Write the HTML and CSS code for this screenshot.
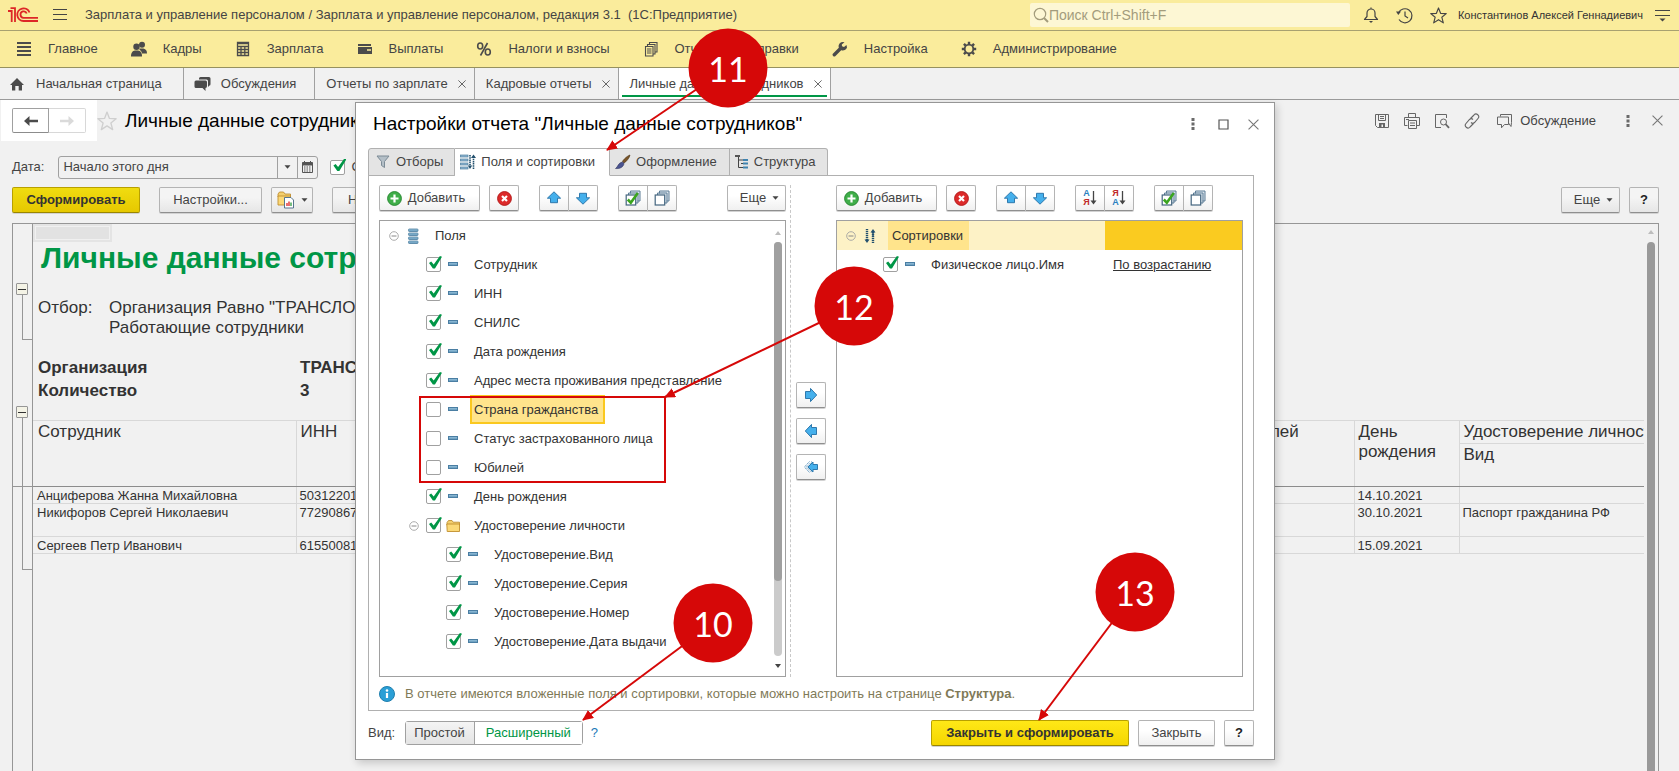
FILE: index.html
```html
<!DOCTYPE html>
<html lang="ru">
<head>
<meta charset="utf-8">
<meta name="viewport" content="width=device-width, initial-scale=1">
<title>Зарплата и управление персоналом</title>
<link rel="stylesheet" href="styles.css">
</head>
<body>
<svg class="sprite" aria-hidden="true">
  <defs>
    <linearGradient id="gBlue" x1="0" y1="0" x2="0" y2="1"><stop offset="0" stop-color="#9cc7e0"/><stop offset="1" stop-color="#5d92b5"/></linearGradient>
  </defs>
  <symbol id="i-close" viewBox="0 0 10 10"><path d="M0.5 0.5L9.5 9.5M9.5 0.5L0.5 9.5" fill="none" stroke="currentColor"/></symbol>
  <symbol id="i-dots" viewBox="0 0 4 12"><path d="M0.5 0h3v3h-3zM0.5 4.5h3v3h-3zM0.5 9h3v3h-3z" fill="#6a6a6a"/></symbol>
  <symbol id="i-star" viewBox="0 0 18 18"><path d="M9 1l2.200 5.700 6 .3-4.700 3.800 1.600 6L9 13.400l-5.100 3.400 1.600-6L.8 7l6-.3z" fill="none" stroke="currentColor" stroke-width="1.200" stroke-linejoin="round"/></symbol>
  <symbol id="i-add" viewBox="0 0 15 15"><circle cx="7.500" cy="7.500" r="6.900" fill="#3fae49" stroke="#2b8a35"/><path d="M7.500 3.500v8M3.500 7.500h8" stroke="#fff" stroke-width="2.200"/></symbol>
  <symbol id="i-del" viewBox="0 0 15 15"><circle cx="7.500" cy="7.500" r="6.900" fill="#dc2a2a" stroke="#b51d1d"/><path d="M5 5l5 5M10 5l-5 5" stroke="#fff" stroke-width="2.200"/></symbol>
  <symbol id="i-up" viewBox="0 0 16 16"><path d="M8 1.800l6.600 6.400h-3.100v4.500h-7V8.200H1.400z" fill="#45b0ec" stroke="#2f79ad" stroke-linejoin="round"/></symbol>
  <symbol id="i-down" viewBox="0 0 16 16"><path d="M8 14.200l6.600-6.400h-3.100V3.300h-7v4.500H1.400z" fill="#45b0ec" stroke="#2f79ad" stroke-linejoin="round"/></symbol>
  <symbol id="i-right" viewBox="0 0 16 16"><path d="M13.700 8L7.500 14.600v-3.100H2.500v-7h5V1.400z" fill="#45b0ec" stroke="#2f79ad" stroke-linejoin="round"/></symbol>
  <symbol id="i-left" viewBox="0 0 16 16"><path d="M2.300 8l6.200 6.600v-3.100h5v-7h-5V1.400z" fill="#45b0ec" stroke="#2f79ad" stroke-linejoin="round"/></symbol>
  <symbol id="i-left2" viewBox="0 0 16 16"><path d="M5 8l5 5v-2.500h4.500v-5H10V3z" fill="#45b0ec" stroke="#2f79ad" stroke-linejoin="round"/><path d="M6.500 2.500L1.500 8l5 5.500M9 2.500L3.500 8l5.500 5.500" fill="none" stroke="#2f79ad" stroke-width=".8" stroke-dasharray="1.500 .7"/></symbol>
  <symbol id="i-sheets" viewBox="0 0 16 16"><path d="M5.500 3.500v-2.500h9.500v10h-2.500M3.500 5.500v-2.500h9.500v10h-2.500" fill="#dce6ee" stroke="#5c7d96"/><rect x="1.200" y="5" width="9.500" height="10" fill="#fff" stroke="#44657f" stroke-width="1.200"/></symbol>
  <symbol id="i-sheets-on" viewBox="0 0 16 16"><path d="M5.500 3.500v-2.500h9.500v10h-2.500M3.500 5.500v-2.500h9.500v10h-2.500" fill="#dce6ee" stroke="#5c7d96"/><rect x="1.200" y="5" width="9.500" height="10" fill="#fff" stroke="#44657f" stroke-width="1.200"/><path d="M2.800 9.500l3 3.200L12.800 3" fill="none" stroke="#3aa51e" stroke-width="2.600"/></symbol>
  <symbol id="i-minus" viewBox="0 0 10 10"><circle cx="5" cy="5" r="4.300" fill="none" stroke="#a3a3a3" stroke-width=".9"/><path d="M2.500 5h5" stroke="#888"/></symbol>
  <symbol id="i-stack" viewBox="0 0 15 16"><g fill="url(#gBlue)" stroke="#4d7f9f" stroke-width=".8"><rect x="2.500" y="1" width="9.500" height="2.500" rx=".8"/><rect x="2.500" y="5" width="9.500" height="2.500" rx=".8"/><rect x="2.500" y="9" width="9.500" height="2.500" rx=".8"/><rect x="2.500" y="13" width="9.500" height="2.500" rx=".8"/></g></symbol>
  <symbol id="i-field" viewBox="0 0 15 16"><rect x="2.500" y="5.500" width="9" height="3" fill="url(#gBlue)" stroke="#4a7ea3"/></symbol>
  <symbol id="i-folder" viewBox="0 0 15 16"><path d="M1 4.500l1.500-2h3.500l1.200 1.700h6.300v3H1z" fill="#f3cf6f" stroke="#b98627" stroke-width=".8"/><path d="M.8 6h12.700v7.500H1.200z" fill="#fbd978" stroke="#c18f2e" stroke-width=".9"/></symbol>
  <symbol id="i-sorts" viewBox="0 0 15 16"><path d="M4 1v11" stroke="#23506e" stroke-width="2.400" stroke-dasharray="1.200 .8"/><path d="M1.500 11.500h5l-2.500 3.500z" fill="#23506e"/><path d="M10 15V4" stroke="#23506e" stroke-width="2.400" stroke-dasharray="1.200 .8"/><path d="M10 9V3" stroke="#23506e" stroke-width="1.400"/><path d="M7.500 4.500h5L10 1z" fill="#23506e"/></symbol>
  <symbol id="i-caret" viewBox="0 0 7 4"><path d="M0.500 0.300h6L3.500 3.800z" fill="#444"/></symbol>
  <symbol id="i-chat" viewBox="0 0 17 16"><path d="M4.500 3.500V1.500h11v8l-.5 4-2.500-3.500" fill="none" stroke="#666" stroke-linejoin="round"/><path d="M1.500 4h11v7.500H8.500L5.500 14.800V11.500h-4z" fill="none" stroke="#666" stroke-linejoin="round"/></symbol>
</svg>

<header class="titlebar">
  <svg class="logo" viewBox="0 0 30 16" role="img" aria-label="1С"><g fill="none" stroke="#dd2727" stroke-width="1.800"><path d="M0 4H3.700V15M2.500 1.200H7V15"/><path d="M21.500 5.500A6.300 6.300 0 1 0 15.500 14H30"/><path d="M18.700 6.500A3.200 3.200 0 1 0 15.500 10.800H30"/></g></svg>
  <button class="plain" aria-label="Меню"><svg width="14" height="14" viewBox="0 0 14 14"><path d="M0 1.500h14M0 6.500h14M0 11.500h14" stroke="#444"/></svg></button>
  <h1 class="app-title">Зарплата и управление персоналом / Зарплата и управление персоналом, редакция 3.1&nbsp; (1С:Предприятие)</h1>
  <label class="search">
    <svg width="16" height="16" viewBox="0 0 16 16"><circle cx="7" cy="7" r="5.700" fill="none" stroke="#a39c7c" stroke-width="1.200"/><path d="M11 11l4 4" stroke="#a39c7c" stroke-width="2"/></svg>
    <input type="text" placeholder="Поиск Ctrl+Shift+F" aria-label="Поиск">
  </label>
  <nav class="title-tools">
    <button class="plain" aria-label="Уведомления"><svg width="16" height="17" viewBox="0 0 16 17"><path d="M1.500 12.500l2.500-3V6a4 4 0 0 1 8 0v3.500l2.500 3z M8 2V.5" fill="none" stroke="#444" stroke-width="1.200" stroke-linejoin="round"/><path d="M6 14h4l-2 2z" fill="#444"/></svg></button>
    <button class="plain" aria-label="История"><svg width="17" height="17" viewBox="0 0 17 17"><path d="M2.500 6A7 7 0 1 1 3 12.500" fill="none" stroke="#444" stroke-width="1.200"/><path d="M0 4.500h5L2.300 8z" fill="#444"/><path d="M9 4.500V9l3 2" fill="none" stroke="#444" stroke-width="1.200"/></svg></button>
    <button class="plain" aria-label="Избранное"><svg width="17" height="17"><use href="#i-star"/></svg></button>
  </nav>
  <span class="user">Константинов Алексей Геннадиевич</span>
  <button class="plain" aria-label="Сервис"><svg width="15" height="14" viewBox="0 0 15 14"><path d="M0 2.500h15M0 7.500h15" stroke="#444"/><path d="M4.500 10.500h6l-3 3z" fill="#444"/></svg></button>
</header>

<nav class="sections">
  <a href="#"><svg width="16" height="16" viewBox="0 0 16 16"><path d="M1 2h14M1 6h14M1 10h14M1 14h14" stroke="#4b4b4b" stroke-width="2"/></svg>Главное</a>
  <a href="#"><svg width="16" height="16" viewBox="0 0 16 16"><g fill="#4b4b4b"><circle cx="11" cy="3.800" r="3"/><path d="M8.500 7.500h4c2.500 1 3.500 2 3.500 5h-5c-.3-2-1-3-2.500-3.800z"/><circle cx="5.500" cy="5.800" r="3.200"/><path d="M0 15.500c0-4 1.500-5.500 4-6h3c2.500.5 4 2 4 6z"/></g></svg>Кадры</a>
  <a href="#"><svg width="16" height="16" viewBox="0 0 16 16"><path d="M2.500 1.500h11v13h-11zM2.500 5.500h11M2.500 8.500h11M2.500 11.500h11M6 5.500v9M9.800 5.500v9M2.500 2.500h11" fill="none" stroke="#4b4b4b" stroke-width="1.300"/></svg>Зарплата</a>
  <a href="#"><svg width="16" height="16" viewBox="0 0 16 16"><path d="M1 3h13v2H1zM1 6h14v7H1z" fill="#4b4b4b"/><path d="M10 9h4" stroke="#faec9c" stroke-width="1.500"/></svg>Выплаты</a>
  <a href="#"><svg width="16" height="16" viewBox="0 0 16 16"><g fill="none" stroke="#4b4b4b" stroke-width="1.600"><ellipse cx="4.200" cy="5" rx="2.500" ry="3"/><ellipse cx="11.800" cy="11" rx="2.500" ry="3"/><path d="M11.500 2L4.500 14.500"/></g></svg>Налоги и взносы</a>
  <a href="#"><svg width="16" height="16" viewBox="0 0 16 16"><g fill="none" stroke="#4b4b4b" stroke-width="1.100"><path d="M2.500 5.500h7.500v9.500H2.500zM4 8h4.500M4 10h4.500M4 12h4.500M4.500 5.500V3.500h7.500V13H10M6.500 3.500V1.500H14V11h-2"/></g></svg>Отчетность, справки</a>
  <a href="#"><svg width="16" height="16" viewBox="0 0 16 16"><path d="M2.300 13.700L9 7" stroke="#4b4b4b" stroke-width="3.400" stroke-linecap="round"/><path d="M12.500 1.200A4.300 4.300 0 1 0 15 6.500L14.500 4l-2.500 2-2-.8-.2-1.700z" fill="#4b4b4b"/></svg>Настройка</a>
  <a href="#"><svg width="16" height="16" viewBox="0 0 16 16"><circle cx="8" cy="8" r="4.300" fill="none" stroke="#4b4b4b" stroke-width="1.800"/><path d="M8 .8v2.500M8 12.700v2.500M.8 8h2.500M12.700 8h2.500M2.900 2.900l1.800 1.800M11.300 11.300l1.800 1.800M2.900 13.100l1.800-1.800M11.300 4.700l1.800-1.800" stroke="#4b4b4b" stroke-width="2.400"/></svg>Администрирование</a>
</nav>

<nav class="tabs">
  <a class="tab tab-home" href="#"><svg width="16" height="16" viewBox="0 0 16 16"><path d="M8 2l7 7h-2v5.500H9.700V10H6.300v4.500H3V9H1z" fill="#4b4b4b"/></svg>Начальная страница</a>
  <a class="tab tab-talk" href="#"><svg width="17" height="16" viewBox="0 0 17 16"><path d="M5 2.500Q5 1 6.500 1h8.500Q16.500 1 16.500 2.500V8q0 1.500-1 1.500L14 11V5q0-1.500-1.500-1.500H5z" fill="#4b4b4b"/><path d="M0.500 6q0-1.500 1.500-1.500h9.500Q13 4.500 13 6v4q0 2-1.500 2v3L8.500 12H2Q.5 12 .5 10.500z" fill="#4b4b4b"/></svg>Обсуждения</a>
  <a class="tab" href="#">Отчеты по зарплате<svg width="8" height="8"><use href="#i-close"/></svg></a>
  <a class="tab" href="#">Кадровые отчеты<svg width="8" height="8"><use href="#i-close"/></svg></a>
  <a class="tab tab-active" href="#">Личные данные сотрудников<svg width="8" height="8"><use href="#i-close"/></svg></a>
</nav>

<main class="page">
  <div class="page-head">
    <div class="history">
      <button class="hist-btn" aria-label="Назад"><svg width="14" height="12" viewBox="0 0 14 12"><path d="M0 6l5.500-5v3.700H14v2.600H5.500V11z" fill="#4b4b4b"/></svg></button><button class="hist-btn hist-off" aria-label="Вперед"><svg width="14" height="12" viewBox="0 0 14 12"><path d="M14 6L8.500 1v3.700H0v2.600h8.500V11z" fill="#dadada"/></svg></button>
    </div>
    <svg class="fav" width="20" height="20"><use href="#i-star"/></svg>
    <h2 class="page-title">Личные данные сотрудников</h2>
    <div class="page-tools">
      <button class="plain" aria-label="Сохранить"><svg width="16" height="16" viewBox="0 0 16 16"><g fill="none" stroke="#666"><path d="M1.500 1.500h13v13h-11l-2-2z"/><path d="M4.500 1.500v6h7v-6M6 3.500h4M6 5.500h4"/></g><path d="M5 10h6v4H9v-2.500H7.500V14H5z" fill="#666"/></svg></button>
      <button class="plain" aria-label="Печать"><svg width="16" height="16" viewBox="0 0 16 16"><g fill="none" stroke="#666"><path d="M4.500 4.500v-4h7v4M3.500 12.500h-3v-8h15v8h-3M4.500 7.500h8v8h-8zM6 10h5M6 12.500h5M2 6.500h3"/></g></svg></button>
      <button class="plain" aria-label="Просмотр"><svg width="16" height="16" viewBox="0 0 16 16"><g fill="none" stroke="#666"><path d="M7 14.500H1.500v-13h11V5"/><circle cx="9.500" cy="9" r="3"/><path d="M11.500 11l3.500 3.800" stroke-width="1.800"/></g></svg></button>
      <button class="plain" aria-label="Ссылка"><svg width="16" height="16" viewBox="0 0 16 16"><g fill="none" stroke="#666" stroke-width="1.100"><path d="M6.500 5.500L10 2a2.500 2.500 0 0 1 4 3.500l-3.500 4a2.500 2.500 0 0 1-3.500 0"/><path d="M9.500 10.500L6 14a2.500 2.500 0 0 1-4-3.500l3.500-4a2.500 2.500 0 0 1 3.500 0"/></g></svg></button>
      <button class="plain talk"><svg width="17" height="16"><use href="#i-chat"/></svg>Обсуждение</button>
      <button class="plain more" aria-label="Еще"><svg width="4" height="12"><use href="#i-dots"/></svg></button>
      <button class="plain" aria-label="Закрыть"><svg class="grey" width="11" height="11"><use href="#i-close"/></svg></button>
    </div>
  </div>

  <div class="filters">
    <label for="date">Дата:</label>
    <div class="combo">
      <input id="date" type="text" value="Начало этого дня">
      <button aria-label="Выбрать"><svg width="7" height="4"><use href="#i-caret"/></svg></button>
      <button aria-label="Календарь"><svg width="11" height="12" viewBox="0 0 11 12"><path d="M.5 1.500h10v10H.5z" fill="none" stroke="#555"/><path d="M.5 2h10v2H.5zM2.500 0v2M8.500 0v2" stroke="#555" fill="#555"/><path d="M2 6h7M2 8h7M2 10h7" stroke="#555" stroke-dasharray="1.500 1"/></svg></button>
    </div>
    <label class="check-line"><input type="checkbox" class="cb" checked>Сотрудник:</label>
  </div>

  <div class="commands">
    <button class="btn btn-main btn-form">Сформировать</button>
    <button class="btn btn-set">Настройки...</button>
    <button class="btn btn-variant" aria-label="Варианты"><svg width="18" height="18" viewBox="0 0 18 18"><path d="M1 3l1.500-2h4L8 3h5.500v3H1z" fill="#f3cf6f" stroke="#b98627" stroke-width=".8"/><path d="M1 5h12.500v9H1z" fill="#fbd978" stroke="#c18f2e" stroke-width=".9"/><path d="M7.500 6.500h6.500l2.500 2.500v8h-9z" fill="#fff" stroke="#56758f"/><path d="M10 15v-3M12 15v-4.500" stroke="#d22" stroke-width="1.300"/><path d="M14 15v-3.500" stroke="#2a9a3c" stroke-width="1.300"/></svg><svg width="7" height="4"><use href="#i-caret"/></svg></button>
    <button class="btn btn-find">Найти...</button>
    <span class="grow"></span>
    <button class="btn btn-more">Еще<svg width="7" height="4"><use href="#i-caret"/></svg></button>
    <button class="btn btn-help">?</button>
  </div>

  <section class="sheet">
    <div class="gutter">
      <button class="fold" aria-label="Свернуть"></button><div class="brace brace-top"></div>
      <button class="fold" aria-label="Свернуть"></button><div class="brace brace-head"></div>
      <div class="brace-rule"></div><div class="brace brace-rows"></div>
    </div>
    <div class="doc">
      <div class="cursor-cell"></div>
      <h3 class="doc-title">Личные данные сотрудников</h3>
      <dl class="doc-filter"><dt>Отбор:</dt><dd>Организация Равно "ТРАНСЛОГ"<br>Работающие сотрудники</dd></dl>
      <dl class="doc-org"><dt>Организация</dt><dd>ТРАНСЛОГ</dd><dt>Количество</dt><dd>3</dd></dl>
      <table class="report">
        <colgroup><col class="c-name"><col><col class="c-jub"><col class="c-day"><col class="c-doc"></colgroup>
        <thead>
          <tr><th class="full" rowspan="2">Сотрудник</th><th class="full" rowspan="2">ИНН</th><th class="full" rowspan="2">Юбилей</th><th class="full" rowspan="2">День рождения</th><th class="nowrap">Удостоверение личности</th></tr>
          <tr class="sub"><th class="full">Вид</th></tr>
        </thead>
        <tbody>
          <tr class="first"><td>Анциферова Жанна Михайловна</td><td>50312201</td><td></td><td>14.10.2021</td><td></td></tr>
          <tr class="tall"><td>Никифоров Сергей Николаевич</td><td>77290867</td><td></td><td>30.10.2021</td><td>Паспорт гражданина РФ</td></tr>
          <tr><td>Сергеев Петр Иванович</td><td>61550081</td><td></td><td>15.09.2021</td><td></td></tr>
        </tbody>
      </table>
    </div>
    <div class="scroll"><i class="arrow-up"></i><i class="thumb thumb-page"></i></div>
  </section>
</main>

<section class="dialog" role="dialog" aria-labelledby="dlg-title">
  <div class="dlg-head">
    <h2 id="dlg-title">Настройки отчета "Личные данные сотрудников"</h2>
    <button class="plain" aria-label="Еще"><svg width="4" height="12"><use href="#i-dots"/></svg></button>
    <button class="plain" aria-label="Развернуть"><svg width="11" height="11" viewBox="0 0 11 11"><path d="M1 1h9v9H1z" fill="none" stroke="#555" stroke-width="1.200"/></svg></button>
    <button class="plain" aria-label="Закрыть"><svg class="grey" width="11" height="11"><use href="#i-close"/></svg></button>
  </div>

  <div class="dlg-tabs">
    <button class="dtab"><svg width="14" height="14" viewBox="0 0 14 14"><path d="M1 1h12L8.500 6.500v6L5.500 10.500v-4z" fill="#b4bfc7" stroke="#7c8b96"/></svg>Отборы</button>
    <button class="dtab dtab-on"><svg width="16" height="16" viewBox="0 0 16 16"><g fill="#8fb6d1" stroke="#4d7f9f" stroke-width=".7"><rect x=".5" y="1" width="7.500" height="2"/><rect x=".5" y="5" width="7.500" height="2"/><rect x=".5" y="9" width="7.500" height="2"/><rect x=".5" y="13" width="7.500" height="2"/></g><path d="M10 1v11M13.500 15V3" stroke="#23506e" stroke-width="1.600" stroke-dasharray="1.500 .7"/><path d="M11 4h5l-2.500-3.500zM7.800 11.500h4.400L10 15z" fill="#23506e"/></svg>Поля и сортировки</button>
    <button class="dtab"><svg width="16" height="16" viewBox="0 0 16 16"><path d="M15 1c-3 1-7 5-7.500 6.500L9 9c2-1 5.500-5 6-8z" fill="#7a5528" stroke="#4c3415" stroke-width=".6"/><path d="M7.200 8L9 9.500C8.500 13 5 15 0.500 14.500 3 13 3 9 7.200 8z" fill="#4b5490" stroke="#2d3360" stroke-width=".6"/></svg>Оформление</button>
    <button class="dtab"><svg width="14" height="14" viewBox="0 0 14 14"><path d="M3.500 1v11.500H8M3.500 5H8M6 8.500h2" fill="none" stroke="#444"/><path d="M0 0h5v2H0z" fill="#555"/><path d="M8 4h5v2H8zM8 7.500h5v2H8zM8 11.500h5v2H8z" fill="#3f83b0"/></svg>Структура</button>
  </div>

  <div class="panel">
    <div class="columns">
      <div class="pane">
        <div class="bar">
          <button class="btn btn-add"><svg width="15" height="15"><use href="#i-add"/></svg>Добавить</button>
          <button class="btn btn-icon gap-s" aria-label="Удалить"><svg width="15" height="15"><use href="#i-del"/></svg></button>
          <span class="pair gap-l"><button class="btn btn-icon" aria-label="Вверх"><svg width="16" height="16"><use href="#i-up"/></svg></button><button class="btn btn-icon" aria-label="Вниз"><svg width="16" height="16"><use href="#i-down"/></svg></button></span>
          <span class="pair gap-l"><button class="btn btn-icon" aria-label="Отметить все"><svg width="16" height="16"><use href="#i-sheets-on"/></svg></button><button class="btn btn-icon" aria-label="Снять все"><svg width="16" height="16"><use href="#i-sheets"/></svg></button></span>
          <span class="grow"></span>
          <button class="btn btn-more">Еще<svg width="7" height="4"><use href="#i-caret"/></svg></button>
        </div>
        <div class="list">
          <ul class="tree">
            <li class="row root"><svg class="exp"><use href="#i-minus"/></svg><svg class="ico"><use href="#i-stack"/></svg><span class="name">Поля</span></li>
            <li><label class="row leaf"><input type="checkbox" class="cb" checked><svg class="ico"><use href="#i-field"/></svg><span class="name">Сотрудник</span></label></li>
            <li><label class="row leaf"><input type="checkbox" class="cb" checked><svg class="ico"><use href="#i-field"/></svg><span class="name">ИНН</span></label></li>
            <li><label class="row leaf"><input type="checkbox" class="cb" checked><svg class="ico"><use href="#i-field"/></svg><span class="name">СНИЛС</span></label></li>
            <li><label class="row leaf"><input type="checkbox" class="cb" checked><svg class="ico"><use href="#i-field"/></svg><span class="name">Дата рождения</span></label></li>
            <li><label class="row leaf"><input type="checkbox" class="cb" checked><svg class="ico"><use href="#i-field"/></svg><span class="name">Адрес места проживания представление</span></label></li>
            <li><label class="row leaf"><input type="checkbox" class="cb"><svg class="ico"><use href="#i-field"/></svg><span class="name current">Страна гражданства</span></label></li>
            <li><label class="row leaf"><input type="checkbox" class="cb"><svg class="ico"><use href="#i-field"/></svg><span class="name">Статус застрахованного лица</span></label></li>
            <li><label class="row leaf"><input type="checkbox" class="cb"><svg class="ico"><use href="#i-field"/></svg><span class="name">Юбилей</span></label></li>
            <li><label class="row leaf"><input type="checkbox" class="cb" checked><svg class="ico"><use href="#i-field"/></svg><span class="name">День рождения</span></label></li>
            <li><label class="row branch"><svg class="exp"><use href="#i-minus"/></svg><input type="checkbox" class="cb" checked><svg class="ico"><use href="#i-folder"/></svg><span class="name">Удостоверение личности</span></label></li>
            <li><label class="row deep"><input type="checkbox" class="cb" checked><svg class="ico"><use href="#i-field"/></svg><span class="name">Удостоверение.Вид</span></label></li>
            <li><label class="row deep"><input type="checkbox" class="cb" checked><svg class="ico"><use href="#i-field"/></svg><span class="name">Удостоверение.Серия</span></label></li>
            <li><label class="row deep"><input type="checkbox" class="cb" checked><svg class="ico"><use href="#i-field"/></svg><span class="name">Удостоверение.Номер</span></label></li>
            <li><label class="row deep"><input type="checkbox" class="cb" checked><svg class="ico"><use href="#i-field"/></svg><span class="name">Удостоверение.Дата выдачи</span></label></li>
          </ul>
          <div class="scroll"><i class="arrow-up"></i><span class="track"><i class="thumb thumb-list"></i></span><i class="arrow-down"></i></div>
        </div>
      </div>

      <div class="mover">
        <button class="btn btn-icon" aria-label="Перенести вправо"><svg width="16" height="16"><use href="#i-right"/></svg></button>
        <button class="btn btn-icon" aria-label="Перенести влево"><svg width="16" height="16"><use href="#i-left"/></svg></button>
        <button class="btn btn-icon" aria-label="Перенести все влево"><svg width="16" height="16"><use href="#i-left2"/></svg></button>
      </div>

      <div class="pane">
        <div class="bar">
          <button class="btn btn-add"><svg width="15" height="15"><use href="#i-add"/></svg>Добавить</button>
          <button class="btn btn-icon gap-s" aria-label="Удалить"><svg width="15" height="15"><use href="#i-del"/></svg></button>
          <span class="pair gap-l"><button class="btn btn-icon" aria-label="Вверх"><svg width="16" height="16"><use href="#i-up"/></svg></button><button class="btn btn-icon" aria-label="Вниз"><svg width="16" height="16"><use href="#i-down"/></svg></button></span>
          <span class="pair gap-l"><button class="btn btn-icon" aria-label="По возрастанию"><span class="letters"><span class="az">А</span><span class="za">Я</span></span><svg width="7" height="14" viewBox="0 0 7 14"><path d="M3.500 0v11" stroke="#444" stroke-width="1.300"/><path d="M0.500 9.500h6l-3 4z" fill="#444"/></svg></button><button class="btn btn-icon" aria-label="По убыванию"><span class="letters"><span class="za">Я</span><span class="az">А</span></span><svg width="7" height="14" viewBox="0 0 7 14"><path d="M3.500 0v11" stroke="#444" stroke-width="1.300"/><path d="M0.500 9.500h6l-3 4z" fill="#444"/></svg></button></span>
          <span class="pair gap-l"><button class="btn btn-icon" aria-label="Отметить все"><svg width="16" height="16"><use href="#i-sheets-on"/></svg></button><button class="btn btn-icon" aria-label="Снять все"><svg width="16" height="16"><use href="#i-sheets"/></svg></button></span>
        </div>
        <div class="list">
          <ul class="tree sorts">
            <li class="sort-row sort-head"><div class="row root"><svg class="exp"><use href="#i-minus"/></svg><svg class="ico"><use href="#i-sorts"/></svg><span class="name picked">Сортировки</span></div><span class="sort-cell"></span></li>
            <li class="sort-row"><label class="row leaf"><input type="checkbox" class="cb" checked><svg class="ico"><use href="#i-field"/></svg><span class="name">Физическое лицо.Имя</span></label><span class="sort-cell"><a href="#">По возрастанию</a></span></li>
          </ul>
        </div>
      </div>
    </div>
    <p class="note"><svg width="16" height="16" viewBox="0 0 16 16"><circle cx="8" cy="8" r="7.500" fill="#2b9fd6" stroke="#1f7fae"/><path d="M8 7v5" stroke="#fff" stroke-width="2.200"/><circle cx="8" cy="4.500" r="1.300" fill="#fff"/></svg><span>В отчете имеются вложенные поля и сортировки, которые можно настроить на странице <b>Структура</b>.</span></p>
  </div>

  <div class="dlg-foot">
    <span>Вид:</span>
    <div class="switch"><button>Простой</button><button class="on">Расширенный</button></div>
    <a class="hint" href="#">?</a>
    <span class="grow"></span>
    <button class="btn btn-main btn-apply">Закрыть и сформировать</button>
    <button class="btn btn-close">Закрыть</button>
    <button class="btn btn-help">?</button>
  </div>
</section>

<svg class="marks" width="1679" height="771" viewBox="0 0 1679 771" aria-hidden="true">
  <defs><marker id="tip" markerUnits="userSpaceOnUse" markerWidth="12" markerHeight="12" refX="10" refY="5" orient="auto"><path d="M0 0L11 5L0 10z" fill="#d60808"/></marker></defs>
  <rect x="420" y="397" width="245" height="85" fill="none" stroke="#d60808" stroke-width="2"/>
  <g stroke="#d60808" stroke-width="2">
    <path d="M728 68L607 150" marker-end="url(#tip)"/>
    <path d="M854 306L665 397" marker-end="url(#tip)"/>
    <path d="M713 623L583 720" marker-end="url(#tip)"/>
    <path d="M1135 592L1039 720" marker-end="url(#tip)"/>
  </g>
  <g fill="#d60808"><circle cx="728" cy="68" r="39.500"/><circle cx="854" cy="306" r="39.500"/><circle cx="713" cy="623" r="39.500"/><circle cx="1135" cy="592" r="39.500"/></g>
  <g class="mark-num"><text x="728" y="82">11</text><text x="854" y="320">12</text><text x="713" y="637">10</text><text x="1135" y="606">13</text></g>
</svg>
</body>
</html>
```

FILE: styles.css
```css
* { box-sizing: border-box; }

body {
  margin: 0;
  height: 100vh;
  overflow: hidden;
  position: relative;
  display: flex;
  flex-direction: column;
  background: #f1f1f1;
  color: #444;
  font: 13px/16px "Liberation Sans", Arial, sans-serif;
}

h1, h2, h3, p, ul, dl, dd { margin: 0; padding: 0; font-weight: normal; }
ul { list-style: none; }
a { color: inherit; text-decoration: none; }
button, input { font: inherit; color: inherit; }
svg { display: block; flex: none; }
.sprite { position: absolute; width: 0; height: 0; }
.plain { display: flex; align-items: center; border: 0; padding: 0; background: none; }
.grow { flex: 1; }
.grey { color: #777; }

/* window caption */
.titlebar {
  display: flex;
  align-items: center;
  height: 31px;
  padding: 0 9px 0 8px;
  background: #faec9c;
  border-bottom: 1px solid #a8a170;
}
.logo { width: 30px; height: 16px; margin-right: 15px; }
.app-title { flex: 1; margin-left: 18px; font-size: 13px; white-space: nowrap; }
.search {
  display: flex;
  align-items: center;
  width: 320px;
  height: 24px;
  margin-bottom: 1px;
  padding-left: 3px;
  background: #fdf7d4;
  border-radius: 2px;
}
.search input { flex: 1; min-width: 0; border: 0; padding: 0; background: none; font-size: 14px; }
.search input::placeholder { color: #a39c7c; opacity: 1; }
.title-tools { display: flex; gap: 17px; margin: 0 11px 0 13px; color: #444; }
.user { margin-right: 12px; font-size: 11px; color: #333; }

/* sections */
.sections {
  display: flex;
  align-items: center;
  gap: 33px;
  height: 37px;
  padding: 0 16px;
  background: #faec9c;
  border-bottom: 1px solid #96915f;
}
.sections a { display: flex; align-items: center; gap: 16px; white-space: nowrap; }

/* open windows */
.tabs { display: flex; height: 32px; border-bottom: 1px solid #9a9a9a; }
.tab { display: flex; align-items: center; gap: 10px; padding: 0 8px 0 11px; border-right: 1px solid #a0a0a0; white-space: nowrap; }
.tab-home { gap: 11px; padding: 0 21px 0 9px; }
.tab-talk { gap: 10px; padding: 0 18px 0 10px; }
.tab-active { background: linear-gradient(#009646, #009646) 3px 27px / calc(100% - 6px) 2px no-repeat #fff; }

/* report page */
.page { flex: 1; min-height: 0; display: flex; flex-direction: column; }
.page-head { display: flex; align-items: center; height: 41px; padding: 0 16px 0 1px; }
.history { display: flex; padding: 8px 11px; background: #fff; }
.hist-btn {
  display: flex; align-items: center; justify-content: center;
  width: 37px; height: 25px; padding: 0;
  background: #fff; border: 1px solid #a0a0a0; border-bottom-color: #8c8c8c; border-radius: 2px 0 0 2px;
}
.hist-off { border-color: #d8d8d8; border-left: 0; border-radius: 0 2px 2px 0; }
.fav { color: #cfcfcf; }
.page-title { flex: 1; margin-left: 8px; font-size: 19px; line-height: 22px; color: #000; }
.page-tools { display: flex; align-items: center; gap: 14px; }
.talk { gap: 7px; margin-left: 2px; }
.more { margin: 0 8px 0 16px; }

.filters { display: flex; align-items: center; height: 24px; margin-top: 14px; padding-left: 12px; }
.combo { display: flex; width: 260px; height: 23px; margin: 0 12px 0 14px; border: 1px solid #a0a0a0; border-radius: 3px; }
.combo input { flex: 1; min-width: 0; border: 0; padding: 0 4px; background: none; }
.combo button { display: flex; align-items: center; justify-content: center; width: 20px; padding: 0; border: 0; border-left: 1px solid #a0a0a0; background: none; }
.check-line { display: flex; align-items: center; gap: 6px; white-space: nowrap; }

.cb {
  appearance: none;
  position: relative;
  flex: none;
  width: 15px; height: 15px; margin: 0;
  border: 1px solid #a0a0a0; border-radius: 2px;
  background: #fff;
}
.cb:checked::after {
  content: "";
  position: absolute;
  left: 2px; top: -2px;
  width: 13px; height: 13px;
  background: #009646;
  clip-path: polygon(0 54%, 17% 42%, 36% 66%, 84% 0, 100% 6%, 46% 96%, 30% 96%);
}

.btn {
  display: flex; align-items: center; justify-content: center;
  height: 26px; padding: 0;
  background: linear-gradient(#fff 40%, #f0f0f0);
  border: 1px solid #b4b4b4; border-bottom-color: #8f8f8f; border-radius: 2px;
  box-shadow: 0 1px 0 #d2d2d2;
  white-space: nowrap;
}
.btn-main { background: linear-gradient(#ffe817, #f5d600); border-color: #b8a000; border-bottom-color: #9a8600; color: #333; font-weight: bold; }
.btn-help { width: 30px; font-weight: bold; color: #222; }
.btn-more { gap: 6px; width: 59px; padding-left: 6px; }

.commands { display: flex; align-items: center; margin-top: 8px; padding: 0 20px 0 12px; }
.commands .btn:not(.btn-main) { background: linear-gradient(#f4f4f4 40%, #e6e6e6); }
.commands .btn-main { background: linear-gradient(#f0dc10, #e6c800); }
.btn-form { width: 128px; }
.btn-set { width: 103px; margin-left: 19px; }
.btn-variant { gap: 6px; width: 42px; margin-left: 9px; }
.btn-find { width: 80px; margin-left: 19px; }
.commands .btn-help { margin-left: 9px; }

.sheet {
  flex: 1; min-height: 0;
  display: grid;
  grid-template-columns: 20px minmax(0, 1fr) 14px;
  margin: 10px 20px 0 12px;
  border: 1px solid #969696; border-bottom: 0;
}
.gutter { display: flex; flex-direction: column; padding-top: 59px; border-right: 1px solid #969696; }
.fold {
  flex: none; width: 12px; height: 12px; margin-left: 3px; padding: 0;
  border: 1px solid #969696; border-radius: 1px;
  background: linear-gradient(#333, #333) center / 8px 1px no-repeat #f4f3e6;
}
.brace { flex: none; margin-left: 9px; border-left: 1px solid #969696; }
.brace-top { height: 45px; margin-bottom: 66px; border-bottom: 1px solid #969696; }
.brace-head { height: 68px; }
.brace-rule { flex: none; height: 1px; background: #969696; }
.brace-rows { height: 83px; border-bottom: 1px solid #969696; }

.doc { overflow: hidden; color: #333; }
.cursor-cell { width: 79px; height: 18px; border: 3px solid #e4e4e4; background: #e2e2e2; outline: 1px solid #f0f0f0; outline-offset: -3px; }
.doc-title { margin: 0 0 0 8px; font-size: 30px; line-height: 32px; font-weight: bold; color: #009646; white-space: nowrap; }
.doc-filter { display: grid; grid-template-columns: 71px 1fr; margin: 24px 0 0 5px; font-size: 17px; line-height: 20px; }
.doc-filter dd { white-space: nowrap; }
.doc-org { display: grid; grid-template-columns: 262px 1fr; margin: 18px 0 0 5px; font-size: 17px; line-height: 23px; }
.doc-org dt, .doc-org dd { font-weight: bold; }
.report { width: 100%; margin-top: 18px; border-collapse: collapse; table-layout: fixed; }
.c-name { width: 263px; }
.c-jub { width: 125px; }
.c-day { width: 105px; }
.c-doc { width: 185px; }
.report th { height: 23px; padding: 1px 4px 0; border: 1px solid #d8d8d8; font-size: 17px; line-height: 20px; font-weight: normal; text-align: left; vertical-align: top; }
.report .sub th { height: 43px; }
.report .nowrap { white-space: nowrap; }
.report td { height: 17px; padding: 1px 3px 0; border: 1px solid #d8d8d8; line-height: 15px; vertical-align: top; white-space: nowrap; }
.report .tall td { height: 33px; }
.report th.full { border-bottom-color: #8c8c8c; }
.report .first td { border-top-color: #8c8c8c; }
.report tr > :first-child:not(.sub th) { border-left: 0; }
.report td:first-child { padding-left: 4px; }
.report tr:not(.sub) > th:first-child { padding-left: 5px; }
.report tr > :last-child { border-right: 0; }

.scroll { display: flex; flex-direction: column; align-items: center; }
.arrow-up, .arrow-down { flex: none; width: 0; height: 0; border: 3px solid transparent; }
.arrow-up { margin-top: 6px; border-bottom: 4px solid #bdbdbd; border-top: 0; }
.arrow-down { border-top: 4px solid #444; border-bottom: 0; }
.thumb { display: block; width: 8px; border-radius: 4px; background: #999; }
.thumb-page { flex: 1; margin-top: 8px; border-radius: 4px 4px 0 0; }

/* settings dialog */
.dialog {
  position: absolute;
  top: 102px; right: 404px; bottom: 11px; left: 355px;
  display: flex;
  flex-direction: column;
  padding: 0 20px 13px 12px;
  background: #fff;
  border: 1px solid #969696;
  box-shadow: 2px 3px 8px rgba(0, 0, 0, .18);
}
.dlg-head { display: flex; align-items: center; height: 42px; padding-left: 5px; }
.dlg-head h2 { flex: 1; font-size: 19px; line-height: 22px; color: #000; }
.dlg-head .plain { margin-left: 23px; }
.dlg-head .plain:last-child { margin: 0 -5px 0 19px; }
.dlg-tabs { position: relative; display: flex; margin-top: 3px; height: 28px; }
.dtab {
  display: flex; align-items: center; gap: 6px;
  height: 28px; padding: 0 11px 0 7px;
  border: 1px solid #b0b0b0; border-left-width: 0;
  background: #e4e4e4;
  white-space: nowrap;
}
.dtab:first-child { border-left-width: 1px; border-radius: 3px 0 0 0; }
.dtab:last-child { border-radius: 0 3px 0 0; }
.dtab:nth-child(n+3) { gap: 5px; padding: 0 12px 0 5px; }
.dtab-on { gap: 5px; padding: 0 14px 0 5px; border-bottom-color: #fff; background: #fff; }
.panel { flex: 1; min-height: 0; display: flex; flex-direction: column; margin-top: -1px; padding: 9px 10px 0; border: 1px solid #b0b0b0; }
.columns { flex: 1; min-height: 0; display: grid; grid-template-columns: 1fr 50px 1fr; }
.pane { display: flex; flex-direction: column; min-width: 0; min-height: 0; }
.bar { display: flex; height: 26px; margin-bottom: 9px; }
.btn-add { gap: 6px; width: 101px; padding-right: 7px; }
.btn-icon { width: 30px; }
.pair { display: flex; }
.pair .btn:first-child { border-radius: 2px 0 0 2px; }
.pair .btn:last-child { width: 29px; border-left: 0; border-radius: 0 2px 2px 0; }
.gap-s { margin-left: 9px; }
.gap-l { margin-left: 20px; }
.letters { display: flex; flex-direction: column; font-size: 9px; line-height: 9px; font-weight: bold; }
.az { color: #2b7fc0; }
.za { color: #c02a2a; }
.list { flex: 1; min-height: 0; display: flex; border: 1px solid #a0a0a0; }
.tree { flex: 1; min-width: 0; color: #333; }
.row { display: flex; align-items: center; height: 29px; white-space: nowrap; }
.root { padding-left: 9px; }
.branch { padding-left: 29px; }
.leaf { padding-left: 46px; }
.deep { padding-left: 66px; }
.exp { width: 10px; height: 10px; margin-right: 7px; }
.ico { width: 15px; height: 16px; }
.cb + .ico { margin-left: 5px; }
.name { margin-left: 9px; padding: 0 4px; line-height: 29px; }
.root .name { margin-left: 10px; }
.current { padding: 0 5px 0 2px; border: 2px solid #fac81f; background: #ffe48c; line-height: 25px; }
.picked { background: #ffe48c; padding-right: 6px; }
.list .scroll { width: 14px; padding: 4px 3px 8px; }
.list .scroll .arrow-down { margin-top: 8px; }
.track { flex: 1; width: 8px; margin-top: 7px; border-radius: 4px; background: #cbcbcb; }
.thumb-list { height: 82%; background: #a0a0a0; }
.sort-row { display: grid; grid-template-columns: 1fr 137px; }
.sort-head { background: #fdf2c6; }
.sort-head .sort-cell { background: #facb20; }
.sort-cell { padding-left: 8px; line-height: 29px; }
.sort-cell a { text-decoration: underline; }
.mover { display: flex; flex-direction: column; align-items: center; gap: 10px; padding-top: 197px; margin-left: 4px; padding-right: 5px; border-left: 1px dashed #c8c8c8; }
.note { display: flex; align-items: center; gap: 10px; height: 33px; color: #7f7a58; }

.dlg-foot { display: flex; align-items: center; height: 26px; margin-top: 9px; }
.switch { display: flex; height: 24px; margin-left: 10px; border: 1px solid #a0a0a0; border-radius: 3px; }
.switch button { padding: 0 9px 0 8px; border: 0; background: linear-gradient(#f4f4f4, #e4e4e4); }
.switch .on { padding: 0 11px; border-left: 1px solid #a0a0a0; background: #fff; color: #009646; }
.hint { margin-left: 8px; color: #1a78b8; }
.btn-apply { width: 198px; }
.btn-close { width: 77px; margin: 0 9px; }

/* numbered callouts */
.marks { position: absolute; left: 0; top: 0; pointer-events: none; }
.mark-num { fill: #fff; font: 34px Lato, "Open Sans", sans-serif; text-anchor: middle; }
```
